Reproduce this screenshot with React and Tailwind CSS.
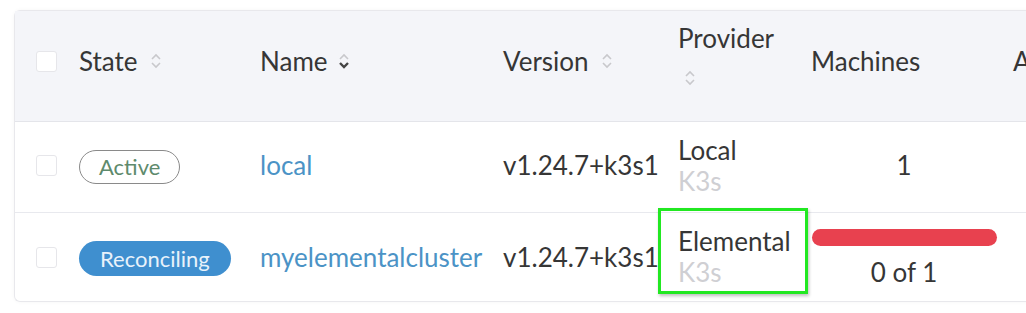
import React from "react"

function SortIcon({ dark }) {
  const light = "#c8c8cc"
  return (
    <svg width="12" height="20" viewBox="0 0 12 20" className="shrink-0">
      <path d="M2 8 L6 4 L10 8" fill="none" stroke={light} strokeWidth="1.6" />
      <path d="M2 12 L6 16 L10 12" fill="none" stroke={dark ? "#444" : light} strokeWidth={dark ? 2.4 : 1.6} />
    </svg>
  )
}

function Checkbox() {
  return <div className="h-[21px] w-[21px] rounded-[3px] border border-[#e6e6ea] bg-white" />
}

export default function App() {
  return (
    <div className="h-[313px] w-[1026px] overflow-hidden bg-white font-['Lato','Noto_Sans',sans-serif] text-[26px] text-[#363636]">
      <div className="ml-[14px] mt-[10px] w-[1060px] rounded-bl-[6px] rounded-tl-[6px] border-b border-l border-t border-[#e8e8ec] shadow-[0_0_4px_rgba(0,0,0,0.04)]">
        {/* header */}
        <div className="flex h-[111px] items-center border-b border-[#e4e5ea] bg-[#f4f5f9] pb-[10px]">
          <div className="flex w-[64px] justify-center pr-[2px]">
            <Checkbox />
          </div>
          <div className="flex w-[181px] items-center gap-[12px]">
            State <SortIcon />
          </div>
          <div className="flex w-[243px] items-center gap-[10px]">
            Name <SortIcon dark />
          </div>
          <div className="flex w-[175px] items-center gap-[12px]">
            Version <SortIcon />
          </div>
          <div className="mt-[12px] flex w-[133px] flex-col items-start self-start">
            <span className="leading-[30px]">Provider</span>
            <span className="pl-[6px] pt-[15px]"><SortIcon /></span>
          </div>
          <div className="w-[202px]">Machines</div>
          <div>Age</div>
        </div>

        {/* row 1 */}
        <div className="flex h-[91px] items-center border-b border-[#e8e9ee] pb-[3px]">
          <div className="flex w-[64px] justify-center pr-[2px]">
            <Checkbox />
          </div>
          <div className="w-[181px]">
            <span className="inline-block rounded-full border-[1.5px] border-[#8a8a8a] px-[19px] text-[22px] leading-[32px] text-[#5e8a6c]">
              Active
            </span>
          </div>
          <div className="w-[243px] text-[#4b93c6]">local</div>
          <div className="w-[175px]">v1.24.7+k3s1</div>
          <div className="flex w-[133px] flex-col leading-[31px]">
            <span>Local</span>
            <span className="text-[#cfcfd3]">K3s</span>
          </div>
          <div className="w-[186px] text-center">1</div>
        </div>

        {/* row 2 */}
        <div className="flex h-[88px] items-center">
          <div className="flex w-[64px] justify-center pr-[2px]">
            <Checkbox />
          </div>
          <div className="w-[181px]">
            <span className="inline-block rounded-full bg-[#3f8fcf] px-[21px] text-[22px] leading-[35px] text-[#e8f2fb]">
              Reconciling
            </span>
          </div>
          <div className="w-[243px] text-[#4b93c6]">myelementalcluster</div>
          <div className="w-[175px]">v1.24.7+k3s1</div>
          <div className="relative flex w-[133px] flex-col leading-[31px]">
            <div className="absolute left-[-20px] top-[-18px] h-[86px] w-[150px] border-[3px] border-[#22e822] shadow-[1px_2px_3px_rgba(0,0,0,0.25)]" />
            <span>Elemental</span>
            <span className="text-[#cfcfd3]">K3s</span>
          </div>
          <div className="flex w-[186px] flex-col items-center gap-[12px]">
            <div className="h-[17px] w-[185px] rounded-full bg-[#e8414f]" />
            <span className="leading-[28px]">0 of 1</span>
          </div>
        </div>
      </div>
    </div>
  )
}
